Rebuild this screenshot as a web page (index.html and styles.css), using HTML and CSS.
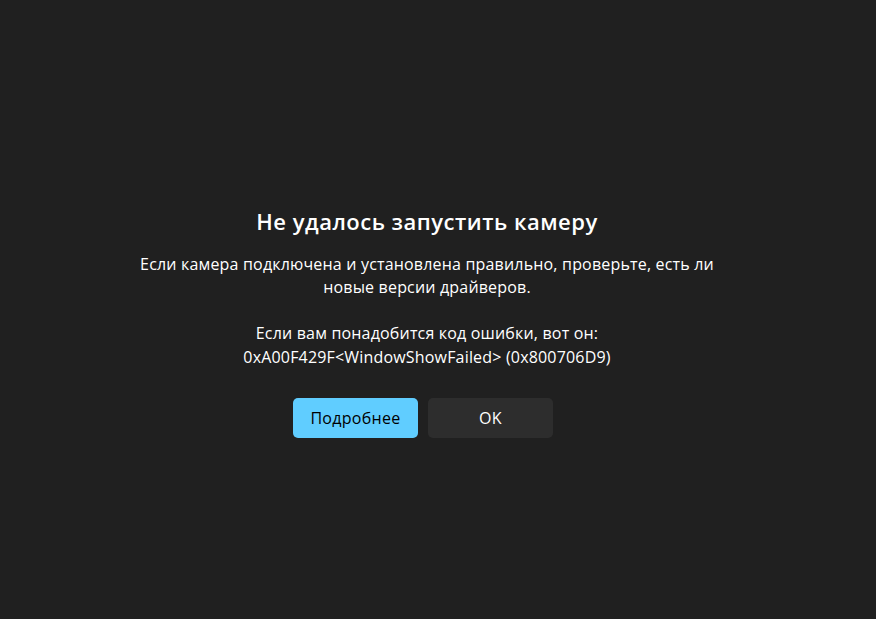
FILE: index.html
```html
<!DOCTYPE html>
<html lang="ru">
<head>
<meta charset="utf-8">
<title>Камера</title>
<link rel="stylesheet" href="styles.css">
</head>
<body>
<main class="page">
  <section class="dialog">
    <h1 class="title">Не удалось запустить камеру</h1>
    <p class="message">Если камера подключена и установлена правильно, проверьте, есть ли<br>новые версии драйверов.</p>
    <p class="message code">Если вам понадобится код ошибки, вот он:<br>0xA00F429F&lt;WindowShowFailed&gt; (0x800706D9)</p>
    <div class="actions">
      <button class="btn btn-primary">Подробнее</button>
      <button class="btn btn-secondary">OK</button>
    </div>
  </section>
</main>
</body>
</html>
```
FILE: styles.css
```css
html, body {
  margin: 0;
  padding: 0;
  background: #202020;
  height: 100%;
}
body {
  font-family: "Open Sans", "Noto Sans", "Liberation Sans", sans-serif;
  color: #ffffff;
}
.page {
  box-sizing: border-box;
  height: 100%;
  padding: 206px 22px 0 0;
}
.dialog {
  display: flex;
  flex-direction: column;
  align-items: center;
  text-align: center;
}
.title {
  margin: 0;
  font-size: 22px;
  line-height: 30px;
  font-weight: 600;
  letter-spacing: 0.5px;
}
.message {
  margin: 0;
  font-size: 16px;
  line-height: 23.3px;
  letter-spacing: 0.18px;
  color: #ffffff;
}
.message:first-of-type {
  margin-top: 16.6px;
}
.code {
  margin-top: 23.3px;
}
.actions {
  display: flex;
  gap: 10px;
  margin-top: 29px;
  margin-right: 8px;
}
.btn {
  width: 125px;
  height: 40px;
  border-radius: 5px;
  border: none;
  font-family: inherit;
  font-size: 16px;
  letter-spacing: 0.3px;
  padding: 0;
}
.btn-primary {
  background: #60cdff;
  color: #000000;
}
.btn-secondary {
  background: #2d2d2d;
  color: #ffffff;
}
```
